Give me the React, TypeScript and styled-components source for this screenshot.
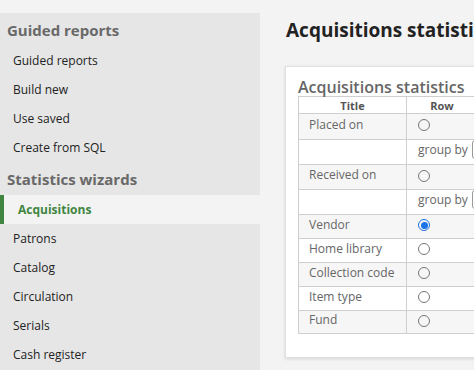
import React from "react";
import styled, { createGlobalStyle } from "styled-components";

const Global = createGlobalStyle`
  html, body { margin: 0; padding: 0; }
  body {
    background: #f3f3f3;
    font-family: "Open Sans", "Liberation Sans", sans-serif;
    width: 474px;
    height: 370px;
    overflow: hidden;
  }
`;

const Page = styled.div`
  display: flex;
  align-items: flex-start;
  gap: 25px;
  padding-top: 13px;
  width: 474px;
  height: 370px;
  box-sizing: border-box;
  overflow: hidden;
`;

const Sidebar = styled.nav`
  flex: 0 0 260px;
  background: #e6e6e6;
  display: flex;
  flex-direction: column;
  padding-bottom: 20px;
`;

const SideHeading = styled.h5`
  margin: 0;
  height: 33px;
  display: flex;
  align-items: center;
  padding-left: 7px;
  font-size: 15px;
  font-weight: 700;
  color: #696969;
`;

const SideItem = styled.a<{ $active?: boolean }>`
  display: flex;
  align-items: center;
  height: 29px;
  box-sizing: border-box;
  padding-left: ${(p) => (p.$active ? "14px" : "13px")};
  font-size: 12px;
  color: ${(p) => (p.$active ? "#408540" : "#222")};
  font-weight: ${(p) => (p.$active ? 700 : 400)};
  background: ${(p) => (p.$active ? "#f3f3f3" : "transparent")};
  border-left: ${(p) => (p.$active ? "4px solid #408540" : "0")};
  text-decoration: none;
`;

const Main = styled.main`
  flex: 0 0 auto;
  display: flex;
  flex-direction: column;
`;

const Title = styled.h1`
  margin: 0;
  height: 53px;
  display: flex;
  align-items: center;
  padding: 0 0 19px 1px;
  box-sizing: border-box;
  font-size: 19px;
  font-weight: 700;
  color: #222;
  white-space: nowrap;
`;

const Card = styled.div`
  background: #fff;
  border: 1px solid #e0e0e0;
  box-shadow: 0 1px 3px rgba(0, 0, 0, 0.12);
  padding: 12px 13px 23px 12px;
  width: 400px;
`;

const Legend = styled.h3`
  margin: 0;
  font-size: 16px;
  font-weight: 600;
  color: #666;
  line-height: 17px;
  white-space: nowrap;
`;

const Table = styled.table`
  border-collapse: collapse;
  table-layout: fixed;
  width: 360px;
`;

const Th = styled.th<{ $w: number }>`
  width: ${(p) => p.$w}px;
  border: 1px solid #cfcfcf;
  font-size: 11px;
  font-weight: 700;
  color: #555;
  text-align: center;
  height: 16px;
  padding: 0;
  white-space: nowrap;
  overflow: hidden;
`;

const Row = styled.tr<{ $shade?: boolean; $h: number }>`
  background: ${(p) => (p.$shade ? "#f6f6f6" : "#fff")};
  height: ${(p) => p.$h}px;
`;

const Td = styled.td`
  border: 1px solid #cfcfcf;
  padding: 0 10px 5px;
  font-size: 12px;
  color: #666;
  white-space: nowrap;
  overflow: visible;
  vertical-align: middle;
`;

const Radio = styled.span<{ $checked?: boolean }>`
  display: inline-block;
  width: 12px;
  height: 12px;
  border-radius: 50%;
  box-sizing: border-box;
  border: 1.5px solid ${(p) => (p.$checked ? "#1a73e8" : "#767676")};
  margin-left: 1px;
  position: relative;
  vertical-align: middle;
  &::after {
    content: "";
    display: ${(p) => (p.$checked ? "block" : "none")};
    position: absolute;
    inset: 1.5px;
    border-radius: 50%;
    background: #1a73e8;
  }
`;

const GroupBy = styled.span`
  display: inline-flex;
  align-items: center;
  gap: 4px;
  margin-left: 1px;
`;

const SelectStub = styled.span`
  display: inline-block;
  width: 40px;
  height: 19px;
  border: 1px solid #999;
  border-radius: 3px;
  box-sizing: border-box;
  background: #fff;
`;

type R = { label: string; kind: "radio" | "group"; checked?: boolean; h: number };

const rows: R[] = [
  { label: "Placed on", kind: "radio", h: 26 },
  { label: "", kind: "group", h: 24 },
  { label: "Received on", kind: "radio", h: 25 },
  { label: "", kind: "group", h: 24 },
  { label: "Vendor", kind: "radio", checked: true, h: 24 },
  { label: "Home library", kind: "radio", h: 24 },
  { label: "Collection code", kind: "radio", h: 24 },
  { label: "Item type", kind: "radio", h: 24 },
  { label: "Fund", kind: "radio", h: 23 },
];

export default function App() {
  return (
    <>
      <Global />
      <Page>
        <Sidebar>
          <SideHeading>Guided reports</SideHeading>
          <SideItem>Guided reports</SideItem>
          <SideItem>Build new</SideItem>
          <SideItem>Use saved</SideItem>
          <SideItem>Create from SQL</SideItem>
          <SideHeading>Statistics wizards</SideHeading>
          <SideItem $active>Acquisitions</SideItem>
          <SideItem>Patrons</SideItem>
          <SideItem>Catalog</SideItem>
          <SideItem>Circulation</SideItem>
          <SideItem>Serials</SideItem>
          <SideItem>Cash register</SideItem>
        </Sidebar>
        <Main>
          <Title>Acquisitions statistics</Title>
          <Card>
            <Legend>Acquisitions statistics</Legend>
            <Table>
              <thead>
                <tr>
                  <Th $w={107}>Title</Th>
                  <Th $w={70}>Row</Th>
                  <Th $w={90}>Column</Th>
                  <Th $w={93}>Filter</Th>
                </tr>
              </thead>
              <tbody>
                {rows.map((r, i) => (
                  <Row key={i} $shade={i % 2 === 0} $h={r.h}>
                    <Td>{r.label}</Td>
                    <Td>
                      {r.kind === "radio" ? (
                        <Radio $checked={r.checked} />
                      ) : (
                        <GroupBy>
                          group by <SelectStub />
                        </GroupBy>
                      )}
                    </Td>
                    <Td />
                    <Td />
                  </Row>
                ))}
              </tbody>
            </Table>
          </Card>
        </Main>
      </Page>
    </>
  );
}
